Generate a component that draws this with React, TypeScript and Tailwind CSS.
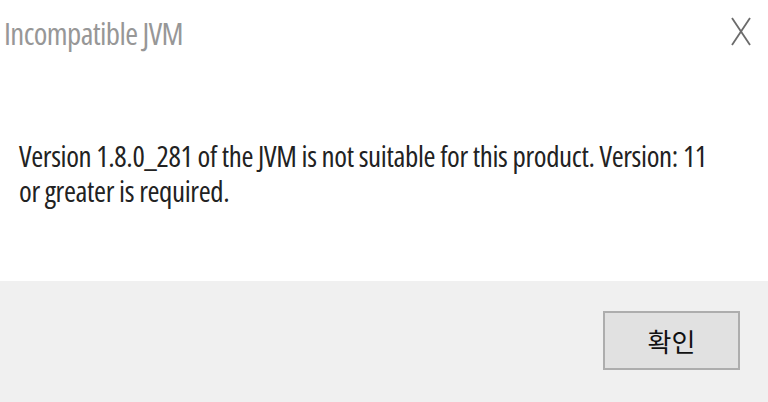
import React from "react"

function CloseIcon() {
    return (
        <svg width="22" height="29" viewBox="0 0 22 29" fill="none" stroke="#6b6b6b" strokeWidth="1.8">
            <line x1="2" y1="1" x2="20" y2="28" />
            <line x1="20" y1="1" x2="2" y2="28" />
        </svg>
    )
}

export default function App() {
    return (
        <div className="w-[768px] h-[402px] bg-white flex flex-col font-['Open_Sans',sans-serif] overflow-hidden">
            <div className="h-[110px] flex justify-between items-start">
                <h1 className="pl-[4px] pt-[13px] text-[31px] leading-[40px] text-[#979797] font-stretch-[75%] tracking-[-0.6px]">
                    Incompatible JVM
                </h1>
                <button className="mr-[16px] mt-[17px]">
                    <CloseIcon />
                </button>
            </div>

            <div className="h-[171px] px-[19px] pt-[28px]">
                <p className="w-[700px] text-[29px] leading-[35px] text-[#222] font-stretch-[75%] tracking-[-0.36px]">
                    Version 1.8.0_281 of the JVM is not suitable for this product. Version: 11 or greater is required.
                </p>
            </div>

            <div className="flex-1 bg-[#f0f0f0] flex justify-end items-start pt-[30px] pr-[28px]">
                <button className="w-[137px] h-[59px] border-2 border-[#adadad] bg-[#e1e1e1] text-[26px] text-[#111] font-['Noto_Sans_CJK_KR',sans-serif]">
                    확인
                </button>
            </div>
        </div>
    )
}
